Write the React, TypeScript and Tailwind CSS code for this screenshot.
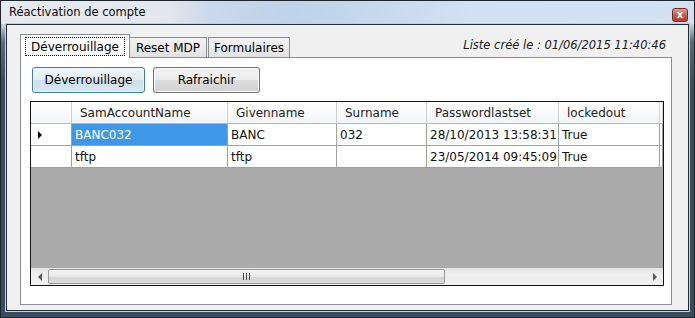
import React from 'react';

type Col = { name: string; width: string };

const columns: Col[] = [
  { name: 'SamAccountName', width: 'w-[156px]' },
  { name: 'Givenname', width: 'w-[109px]' },
  { name: 'Surname', width: 'w-[90px]' },
  { name: 'Passwordlastset', width: 'w-[132px]' },
  { name: 'lockedout', width: 'w-[101px]' },
];

const rows: string[][] = [
  ['BANC032', 'BANC', '032', '28/10/2013 13:58:31', 'True'],
  ['tftp', 'tftp', '', '23/05/2014 09:45:09', 'True'],
];

const DataGrid: React.FC = () => (
  <div className="w-[634px] h-[185px] border border-[#141414] bg-[#ababab] flex flex-col overflow-hidden">
    {/* header */}
    <div className="flex h-[22px] shrink-0 bg-[linear-gradient(to_bottom,#ffffff,#f3f4f6)] border-b border-[#b8b8b8]">
      <div className="w-[41px] shrink-0 border-r border-[#d0d0d0]" />
      {columns.map((c) => (
        <div key={c.name} className={`${c.width} shrink-0 border-r border-[#d0d0d0] flex items-center pl-[8px] text-[12px] text-[#222] whitespace-nowrap overflow-hidden`}>
          {c.name}
        </div>
      ))}
      <div className="flex-1 border-r border-[#d0d0d0]" />
    </div>

    {rows.map((r, i) => (
      <div key={i} className="flex h-[22px] shrink-0 bg-white border-b border-[#a0a0a0]">
        <div className="w-[41px] shrink-0 border-r border-[#a0a0a0] flex items-center pl-[7px]">
          {i === 0 && (
            <span className="block w-0 h-0 border-y-[4px] border-y-transparent border-l-[4px] border-l-black" />
          )}
        </div>
        {r.map((v, j) => (
          <div
            key={j}
            className={`${columns[j].width} shrink-0 border-r border-[#a0a0a0] flex items-center pl-[3px] text-[12px] whitespace-nowrap overflow-hidden ${
              i === 0 && j === 0 ? 'bg-[#3f97e9] text-white' : 'text-[#111]'
            }`}
          >
            {v}
          </div>
        ))}
        <div className="w-[3px] shrink-0 border-r border-[#a0a0a0]" />
        <div className="flex-1 bg-[#ababab]" />
      </div>
    ))}

    <div className="flex-1" />

    {/* horizontal scrollbar */}
    <div className="h-[17px] shrink-0 flex bg-[linear-gradient(to_bottom,#e2e2e2,#efefef_35%,#f0f0f0)]">
      <div className="w-[17px] flex items-center justify-center">
        <span className="block w-0 h-0 border-y-[4px] border-y-transparent border-r-[4px] border-r-[#5a5a5a]" />
      </div>
      <div className="flex-1 py-[1px]">
        <div className="w-[397px] h-full rounded-[2px] border border-[#9b9b9b] bg-[linear-gradient(to_bottom,#f4f4f4,#e8e8e8_50%,#d6d6d6_51%,#dcdcdc)] flex items-center justify-center gap-[2px]">
          <span className="block w-[1px] h-[7px] bg-[#4a4a4a]" />
          <span className="block w-[1px] h-[7px] bg-[#4a4a4a]" />
          <span className="block w-[1px] h-[7px] bg-[#4a4a4a]" />
        </div>
      </div>
      <div className="w-[17px] flex items-center justify-center">
        <span className="block w-0 h-0 border-y-[4px] border-y-transparent border-l-[4px] border-l-[#5a5a5a]" />
      </div>
    </div>
  </div>
);

export default function App() {
  return (
    <div className="w-[695px] h-[318px] flex flex-col bg-[#3a4b5b] border border-[#1d252d] overflow-hidden font-['DejaVu_Sans',sans-serif] text-black">
      {/* Title bar */}
      <div className="h-[23px] shrink-0 flex items-center pl-[8px] pr-[6px] bg-[linear-gradient(to_right,#e6eaef_0%,#e3e8ee_24%,#cad9ea_30%,#bfd2e9_42%,#c8d9ec_55%,#d3e2f2_68%,#d0e1f2_100%)]">
        <span className="text-[11.5px] text-[#0c0c0c]">Réactivation de compte</span>
        <div className="ml-auto self-start mt-[7px] w-[16px] h-[14px] rounded-[3px] border border-[#7d2a22] bg-[linear-gradient(to_bottom,#e0a195,#c75b4c_50%,#b44232)] flex items-center justify-center">
          <span className="text-[10px] leading-none font-bold text-white">x</span>
        </div>
      </div>

      {/* frame + client */}
      <div className="flex-1 flex px-[5px] pb-[6px] bg-[linear-gradient(to_bottom,#c9d6e2,#5a6c7c_6%,#3a4b5b_20%)]">
        <div className="flex-1 flex flex-col border border-[#222c35] shadow-[0_0_0_1px_#c5d0da] bg-[#f0f0f0]">
          {/* tab row */}
          <div className="mt-[9px] h-[23px] flex items-end pl-[13px] pr-[22px]">
            <div className="relative z-10 h-[24px] mb-[-1px] w-[110px] bg-white border border-b-0 border-[#898c95] px-[4px] pt-[2px] pb-[2px]">
              <div className="h-full border border-dotted border-black flex items-center justify-center text-[12px]">
                Déverrouillage
              </div>
            </div>
            <div className="h-[20px] w-[77px] bg-[linear-gradient(to_bottom,#f3f3f3,#e2e2e2)] border border-b-0 border-l-0 border-[#898c95] flex items-center justify-center text-[12px]">
              Reset MDP
            </div>
            <div className="h-[20px] w-[82px] ml-[1px] bg-[linear-gradient(to_bottom,#f3f3f3,#e2e2e2)] border border-b-0 border-[#898c95] flex items-center justify-center text-[12px]">
              Formulaires
            </div>
            <span className="ml-auto self-center mt-[1px] text-[11.5px] italic text-[#202020]">
              Liste créé le : 01/06/2015 11:40:46
            </span>
          </div>

          {/* tab page */}
          <div className="ml-[13px] w-[652px] h-[248px] border border-[#898c95] bg-white px-[9px] pt-[9px]">
            <div className="flex gap-[8px] ml-[2px]">
              <button className="w-[113px] h-[26px] rounded-[3px] border border-[#3c7fb1] bg-[linear-gradient(to_bottom,#f1f6f9,#e1ecf3_50%,#cfe0ec_51%,#d8e7f1)] text-[12px] shadow-[inset_0_0_0_1px_#e8f4fb]">
                Déverrouillage
              </button>
              <button className="w-[107px] h-[26px] rounded-[3px] border border-[#707070] bg-[linear-gradient(to_bottom,#f2f2f2,#ebebeb_50%,#dddddd_51%,#d1d1d1)] text-[12px] shadow-[inset_0_0_0_1px_#fcfcfc]">
                Rafraichir
              </button>
            </div>
            <div className="mt-[8px]">
              <DataGrid />
            </div>
          </div>
        </div>
      </div>
    </div>
  );
}
